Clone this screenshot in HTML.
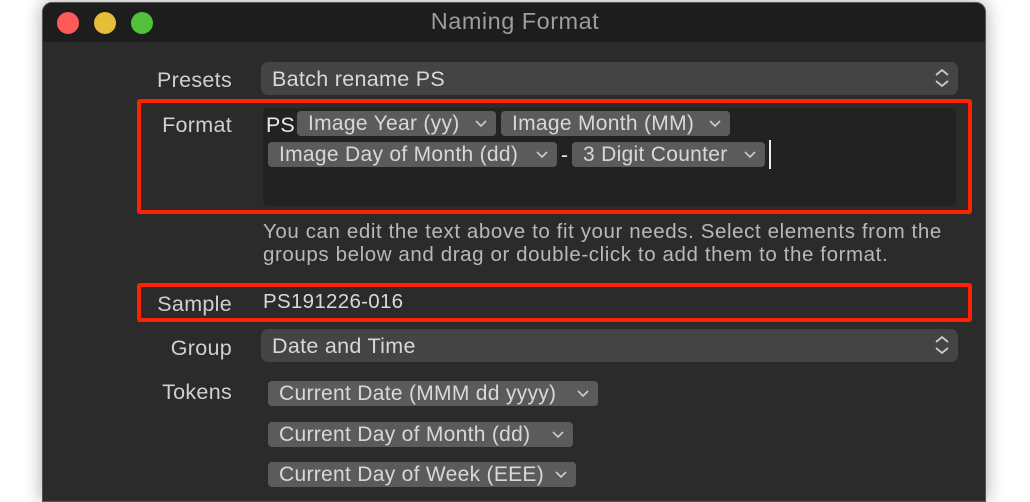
<!DOCTYPE html><html><head><style>
body{margin:0;width:1030px;height:476px;background:#fff;overflow:hidden;position:relative;font-family:"Liberation Sans",sans-serif}
.a{position:absolute;white-space:nowrap}
.win{left:42px;top:2px;width:944px;height:500px;background:#2b2b2b;border-radius:10px 10px 0 0;box-shadow:0 0 18px rgba(0,0,0,.35);border:1px solid #555;box-sizing:border-box;overflow:hidden}
.tb{left:0;top:0;width:100%;height:39px;background:#1d1d1d}
.dot{width:22px;height:22px;border-radius:50%;top:9px}
.lbl{color:#d0d0d0;font-size:21.5px;text-align:right;width:140px;letter-spacing:.3px}
.pop{background:#444;border-radius:7px;color:#d8d8d8;font-size:21.5px;box-sizing:border-box;padding-left:11px;line-height:34px;letter-spacing:.3px}
.chip{background:#5b5b5b;border-radius:4px;height:25px;line-height:26px;color:#d8d8d8;font-size:21px;padding-left:11px;box-sizing:border-box;letter-spacing:.3px}
.chip svg,.pop svg{position:absolute;right:9px;top:9px}
.red{border:4px solid #ff2200;border-radius:3px;box-sizing:border-box}
.help{color:#b8b8b8;font-size:20.5px;line-height:23px;letter-spacing:.6px}
</style></head><body>
<div class="a win">
 <div class="a tb"></div>
 <div class="a dot" style="left:14px;background:#fd5b57"></div>
 <div class="a dot" style="left:51px;background:#e5bd36"></div>
 <div class="a dot" style="left:88px;background:#52c23b"></div>
</div>
<div class="a" style="left:0;width:1030px;top:8px;text-align:center;color:#9d9d9d;font-size:23.5px;letter-spacing:.5px">Naming Format</div>
<div class="a lbl" style="left:92px;top:68px">Presets</div>
<div class="a pop" style="left:261px;top:62px;width:697px;height:33px">Batch rename PS<svg width="16" height="22" style="top:5px;right:8px" viewBox="0 0 16 22"><path d="M2 8l6-5 6 5M2 14l6 5 6-5" stroke="#ccc" stroke-width="1.8" fill="none"/></svg></div>
<div class="a red" style="left:137px;top:99px;width:835px;height:115px"></div>
<div class="a lbl" style="left:92px;top:113px">Format</div>
<div class="a" style="left:263px;top:108px;width:693px;height:98px;background:#222;border-radius:5px"></div>
<div class="a" style="left:266px;top:113px;color:#e8e8e8;font-size:21.5px">PS</div>
<div class="a chip" style="left:297px;top:111px;width:199px">Image Year (yy)<svg width="12" height="8"><path d="M1 1l5 5 5-5" stroke="#ccc" stroke-width="1.6" fill="none"/></svg></div>
<div class="a chip" style="left:501px;top:111px;width:229px">Image Month (MM)<svg width="12" height="8"><path d="M1 1l5 5 5-5" stroke="#ccc" stroke-width="1.6" fill="none"/></svg></div>
<div class="a chip" style="left:268px;top:142px;width:289px">Image Day of Month (dd)<svg width="12" height="8"><path d="M1 1l5 5 5-5" stroke="#ccc" stroke-width="1.6" fill="none"/></svg></div>
<div class="a" style="left:561px;top:144px;color:#e8e8e8;font-size:21px">-</div>
<div class="a chip" style="left:572px;top:142px;width:193px">3 Digit Counter<svg width="12" height="8"><path d="M1 1l5 5 5-5" stroke="#ccc" stroke-width="1.6" fill="none"/></svg></div>
<div class="a" style="left:769px;top:140px;width:2px;height:29px;background:#eee"></div>
<div class="a help" style="left:263px;top:220px">You can edit the text above to fit your needs. Select elements from the<br>groups below and drag or double-click to add them to the format.</div>
<div class="a red" style="left:137px;top:283px;width:835px;height:39px"></div>
<div class="a lbl" style="left:92px;top:292px">Sample</div>
<div class="a" style="left:263px;top:290px;color:#d8d8d8;font-size:20.5px;letter-spacing:.3px">PS191226-016</div>
<div class="a lbl" style="left:92px;top:336px">Group</div>
<div class="a pop" style="left:261px;top:329px;width:697px;height:33px">Date and Time<svg width="16" height="22" style="top:5px;right:8px" viewBox="0 0 16 22"><path d="M2 8l6-5 6 5M2 14l6 5 6-5" stroke="#ccc" stroke-width="1.8" fill="none"/></svg></div>
<div class="a lbl" style="left:92px;top:380px">Tokens</div>
<div class="a chip" style="left:268px;top:381px;width:330px">Current Date (MMM dd yyyy)<svg width="12" height="8"><path d="M1 1l5 5 5-5" stroke="#ccc" stroke-width="1.6" fill="none"/></svg></div>
<div class="a chip" style="left:268px;top:422px;width:305px">Current Day of Month (dd)<svg width="12" height="8"><path d="M1 1l5 5 5-5" stroke="#ccc" stroke-width="1.6" fill="none"/></svg></div>
<div class="a chip" style="left:268px;top:462px;width:308px">Current Day of Week (EEE)<svg width="12" height="8"><path d="M1 1l5 5 5-5" stroke="#ccc" stroke-width="1.6" fill="none"/></svg></div>
</body></html>
